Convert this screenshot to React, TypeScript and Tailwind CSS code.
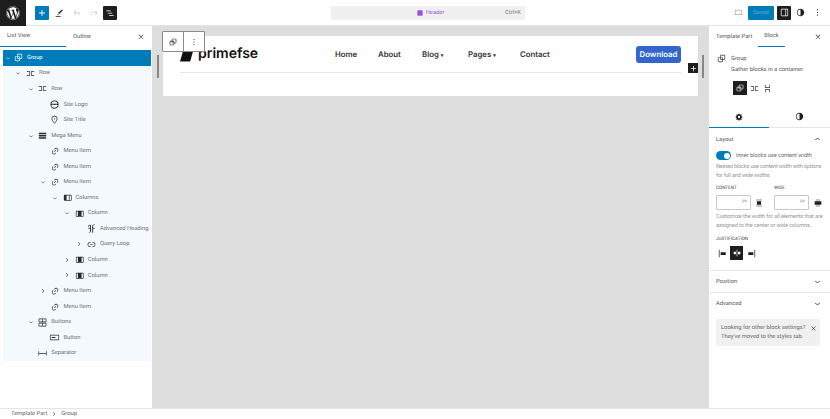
import React from "react";
import { FaWordpress } from "react-icons/fa";

type P = { d: string; className?: string };
const I = ({ d, className = "w-[10px] h-[10px]" }: P) => (
  <svg viewBox="0 0 24 24" fill="currentColor" className={`shrink-0 ${className}`}>
    <path d={d} />
  </svg>
);

const D = {
  group: "M18 4h-7c-1.1 0-2 .9-2 2v3H6c-1.1 0-2 .9-2 2v7c0 1.1.9 2 2 2h7c1.1 0 2-.9 2-2v-3h3c1.1 0 2-.9 2-2V6c0-1.1-.9-2-2-2zm-4.5 14c0 .3-.2.5-.5.5H6c-.3 0-.5-.2-.5-.5v-7c0-.3.2-.5.5-.5h3V13c0 1.1.9 2 2 2h2.5v3zm0-4.5H11c-.3 0-.5-.2-.5-.5v-2.5H13c.3 0 .5.2.5.5v2.5zm5-.5c0 .3-.2.5-.5.5h-3V11c0-1.1-.9-2-2-2h-2.5V6c0-.3.2-.5.5-.5h7c.3 0 .5.2.5.5v7z",
  row: "M4 6.5h5a2 2 0 0 1 2 2v7a2 2 0 0 1-2 2H4V16h5a.5.5 0 0 0 .5-.5v-7A.5.5 0 0 0 9 8H4V6.5Zm16 0h-5a2 2 0 0 0-2 2v7a2 2 0 0 0 2 2h5V16h-5a.5.5 0 0 1-.5-.5v-7A.5.5 0 0 1 15 8h5V6.5Z",
  stack: "M17.5 4v5a2 2 0 0 1-2 2h-7a2 2 0 0 1-2-2V4H8v5a.5.5 0 0 0 .5.5h7A.5.5 0 0 0 16 9V4h1.5Zm0 16v-5a2 2 0 0 0-2-2h-7a2 2 0 0 0-2 2v5H8v-5a.5.5 0 0 1 .5-.5h7a.5.5 0 0 1 .5.5v5h1.5Z",
  marker: "M12 9c-.8 0-1.5.7-1.5 1.5S11.2 12 12 12s1.5-.7 1.5-1.5S12.8 9 12 9zm0-5c-3.6 0-6.5 2.8-6.5 6.2 0 .8.3 1.8.9 3.1.5 1.1 1.2 2.3 2 3.6.7 1 3 3.8 3.2 3.9l.4.5.4-.5c.2-.2 2.6-2.9 3.2-3.9.8-1.2 1.5-2.5 2-3.6.6-1.3.9-2.3.9-3.1C18.5 6.8 15.6 4 12 4zm4.3 8.7c-.5 1-1.1 2.2-1.9 3.4-.5.7-1.7 2.2-2.4 3-.7-.8-1.9-2.3-2.4-3-.8-1.2-1.4-2.3-1.9-3.3-.6-1.4-.7-2.2-.7-2.5 0-2.6 2.2-4.7 5-4.7s5 2.1 5 4.7c0 .2-.1 1-.7 2.4z",
  link: "M10 17.389H8.444A5.194 5.194 0 1 1 8.444 7H10v1.5H8.444a3.694 3.694 0 0 0 0 7.389H10v1.5ZM14 7h1.556a5.194 5.194 0 0 1 0 10.39H14v-1.5h1.556a3.694 3.694 0 0 0 0-7.39H14V7Zm-4.5 6h5v-1.5h-5V13Z",
  columns: "M15 7.5h-5v10h5v-10Zm1.5 0v10H19a.5.5 0 0 0 .5-.5V8a.5.5 0 0 0-.5-.5h-2.5ZM6 7.5h2.5v10H6a.5.5 0 0 1-.5-.5V8a.5.5 0 0 1 .5-.5ZM6 6h13a2 2 0 0 1 2 2v9a2 2 0 0 1-2 2H6a2 2 0 0 1-2-2V8a2 2 0 0 1 2-2Z",
  column: "M6 6h13a2 2 0 0 1 2 2v9a2 2 0 0 1-2 2H6a2 2 0 0 1-2-2V8a2 2 0 0 1 2-2Zm0 1.5a.5.5 0 0 0-.5.5v9a.5.5 0 0 0 .5.5h2.5v-10H6Zm10.5 0v10H19a.5.5 0 0 0 .5-.5V8a.5.5 0 0 0-.5-.5h-2.5Z",
  separator: "M4.5 12.5v4H3V7h1.5v3.987h15V7H21v9.5h-1.5v-4h-15Z",
  menu: "M4 6h16v3H4V6Zm0 5h16v3H4v-3Zm0 5h16v3H4v-3Z",
  logo: "M12 3a9 9 0 1 0 0 18 9 9 0 0 0 0-18Zm0 1.7a7.3 7.3 0 0 1 7.1 5.6H4.9A7.3 7.3 0 0 1 12 4.7Zm0 14.6a7.3 7.3 0 0 1-7.2-6h1.4l2.2-1.5 2.2 1.5h2.8l2.2-1.5 2.2 1.5h1.4a7.3 7.3 0 0 1-7.2 6Z",
  buttons: "M5 3.5h14a1.5 1.5 0 0 1 1.5 1.5v5a1.5 1.5 0 0 1-1.500 1.500H5A1.500 1.500 0 0 1 3.500 10V5A1.500 1.500 0 0 1 5 3.500Zm.5 1.500a.5.5 0 0 0-.5.500v4a.5.5 0 0 0 .5.500H11V5H5.500Zm7 0v5h6a.5.5 0 0 0 .5-.500v-4a.5.5 0 0 0-.5-.500h-6ZM5 12.500h14a1.500 1.500 0 0 1 1.500 1.500v5a1.500 1.500 0 0 1-1.500 1.500H5A1.500 1.500 0 0 1 3.500 19v-5A1.500 1.500 0 0 1 5 12.500Zm.5 1.500a.5.5 0 0 0-.5.500v4a.5.5 0 0 0 .5.500H11v-5H5.500Zm7 0v5h6a.5.5 0 0 0 .5-.500v-4a.5.5 0 0 0-.5-.500h-6Z",
  button: "M3 6h18a1 1 0 0 1 1 1v10a1 1 0 0 1-1 1H3a1 1 0 0 1-1-1V7a1 1 0 0 1 1-1Zm.5 1.500v9h17v-9h-17ZM6 11h8v2H6v-2Z",
  heading: "M9 4c-2.500 0-4 1.500-4 3.500 0 1.300.8 2.200 2 2.400V8.500C6.400 8.300 6.200 7.900 6.200 7.400 6.200 6.200 7.300 5.300 9 5.300V11H5.500v1.300H9V17c0 1.800-.8 2.800-2.500 3v1c3 0 4.500-1.500 4.500-4V5.500C11 4.500 10 4 9 4Zm8.500-1c-2.500 0-4 1.600-4 4.200V21h2v-8.700H19V11h-3.500V7c0-1.700.7-2.700 2.300-2.700.7 0 1.200.2 1.700.5V3.400c-.5-.2-1.200-.4-2-.4Z",
  undo: "M18.3 11.7c-.6-.6-1.400-.9-2.300-.9H6.700l2.900-3.300-1.100-1-4.500 5L8.500 16l1-1-2.700-2.700H16c.5 0 .9.200 1.300.5 1 1 1 3.400 1 4.500v.3h1.500v-.2c0-1.500 0-4.300-1.500-5.700z",
  redo: "M15.600 6.500l-1.100 1 2.900 3.300H8c-.9 0-1.700.3-2.300.9-1.400 1.500-1.400 4.200-1.400 5.600v.2h1.500v-.3c0-1.100 0-3.500 1-4.500.3-.3.7-.5 1.300-.5h9.200L14.500 15l1.100 1.100 4.600-4.600-4.600-5z",
  listview: "M3 6h11v1.500H3V6Zm3.500 5.500h11V13h-11v-1.500ZM21 17H10v1.500h11V17Z",
  plus: "M11 5h2v6h6v2h-6v6h-2v-6H5v-2h6V5Z",
  pen: "M19.500 3.500l1.800 1.800-8 8.200-3-.5.300-2.500 8.900-7Zm-9.800 10.700 1.700 1.800-2.400 1.500-1.500-1 2.200-2.300ZM4 20h12v1.500H4V20Z",
  close: "M13 11.800l6.100-6.100-1.100-1L12 10.800 6 4.700 4.900 5.800 11 11.800 4.900 17.900 6 19l6-6.100 6 6.100 1.100-1.100-6.100-6.100Z",
  contrast: "M12 4c-4.400 0-8 3.600-8 8s3.600 8 8 8 8-3.600 8-8-3.600-8-8-8zm0 14.500c-3.600 0-6.500-2.900-6.500-6.500S8.400 5.500 12 5.500v13z",
  sidebar: "M18 4H6c-1.100 0-2 .9-2 2v12c0 1.100.9 2 2 2h12c1.100 0 2-.9 2-2V6c0-1.100-.9-2-2-2zM6 18.500c-.3 0-.5-.2-.5-.5V6c0-.3.2-.5.5-.5h8v13H6zm12.500-.5c0 .3-.2.5-.5.500h-2.500v-13H18c.3 0 .5.2.5.5v12z",
  desktop: "M20.500 16h-.7V8c0-1.100-.9-2-2-2H6.200c-1.100 0-2 .9-2 2v8h-.7c-.8 0-1.500.7-1.500 1.500h20c0-.8-.7-1.500-1.500-1.500zM5.700 8c0-.3.2-.5.500-.5h11.600c.3 0 .5.200.5.500v7.600H5.700V8z",
  dots: "M13 19h-2v-2h2v2Zm0-6h-2v-2h2v2Zm0-6h-2V5h2v2Z",
  down: "M17.500 11.600L12 16l-5.500-4.400.9-1.200L12 14l4.500-3.600 1 1.200z",
  up: "M6.500 12.400L12 8l5.500 4.400-.9 1.200L12 10l-4.500 3.600-1-1.200z",
  right: "M10.600 6L9.400 7l3.600 5-3.600 5 1.200 1 4.400-6-4.400-6z",
  cog: "M10.300 2h3.400l.5 2.700 1.600.7 2.300-1.500 2.400 2.400-1.500 2.300.7 1.600 2.300.5v3.400l-2.300.5-.7 1.600 1.500 2.300-2.400 2.400-2.300-1.500-1.600.7-.5 2.300h-3.400l-.5-2.300-1.600-.7-2.300 1.500-2.400-2.400 1.500-2.300-.7-1.600-2.300-.5V10.500l2.300-.5.7-1.600-1.500-2.300 2.400-2.400 2.300 1.500 1.600-.7.500-2.500ZM12 8.500a3.500 3.500 0 1 0 0 7 3.500 3.500 0 0 0 0-7Z",
  alignMiddle: "M5 4h14v1.500H5V4Zm0 14.500h14V20H5v-1.500ZM7 8h10v8H7V8Z",
  alignWide: "M7 4h10v1.500H7V4Zm0 14.500h10V20H7v-1.500ZM4 8h16v8H4V8Z",
  jLeft: "M4 4h1.500v16H4V4Zm4 5h11v6H8V9Z",
  jCenter: "M11.200 4h1.600v16h-1.600V4ZM4 9h5.500v6H4V9Zm10.500 0H20v6h-5.500V9Z",
  jRight: "M18.500 4H20v16h-1.500V4ZM5 9h11v6H5V9Z",
};

type Row = { label: string; icon: string; level: number; chev?: "down" | "right"; rot?: boolean };
const rows: Row[] = [
  { label: "Row", icon: D.row, level: 1, chev: "down" },
  { label: "Row", icon: D.row, level: 2, chev: "down" },
  { label: "Site Logo", icon: D.logo, level: 3 },
  { label: "Site Title", icon: D.marker, level: 3 },
  { label: "Mega Menu", icon: D.menu, level: 2, chev: "down" },
  { label: "Menu Item", icon: D.link, level: 3, rot: true },
  { label: "Menu Item", icon: D.link, level: 3, rot: true },
  { label: "Menu Item", icon: D.link, level: 3, chev: "down", rot: true },
  { label: "Columns", icon: D.columns, level: 4, chev: "down" },
  { label: "Column", icon: D.column, level: 5, chev: "down" },
  { label: "Advanced Heading", icon: D.heading, level: 6 },
  { label: "Query Loop", icon: D.link, level: 6, chev: "right" },
  { label: "Column", icon: D.column, level: 5, chev: "right" },
  { label: "Column", icon: D.column, level: 5, chev: "right" },
  { label: "Menu Item", icon: D.link, level: 3, chev: "right", rot: true },
  { label: "Menu Item", icon: D.link, level: 3, rot: true },
  { label: "Buttons", icon: D.buttons, level: 2, chev: "down" },
  { label: "Button", icon: D.button, level: 3 },
  { label: "Separator", icon: D.separator, level: 2 },
];
const pads = ["pl-0", "pl-[11.3px]", "pl-[23.5px]", "pl-[35.7px]", "pl-[47.9px]", "pl-[60.1px]", "pl-[72.3px]"];

const ListRow = ({ r }: { r: Row }) => (
  <div className={`flex items-center h-[15.55px] text-[#707070] ${pads[r.level]}`}>
    <span className="w-[8px] h-[8px] flex items-center justify-center text-[#1e1e1e]">
      {r.chev && <I d={r.chev === "down" ? D.down : D.right} className="w-[8px] h-[8px]" />}
    </span>
    <span className="ml-[2.7px] w-[11px] flex justify-center text-[#2a2a2a]">
      <I d={r.icon} className={r.rot ? "w-[10px] h-[10px] -rotate-45" : "w-[11px] h-[11px]"} />
    </span>
    <span className="ml-[3px] whitespace-nowrap pt-[1px]">{r.label}</span>
  </div>
);

export default function App() {
  return (
    <div className="w-[830px] h-[419px] flex flex-col overflow-hidden bg-white text-[5.8px] text-[#333] font-['Roboto',sans-serif] [text-rendering:geometricPrecision]">
      <header className="h-[26px] shrink-0 flex items-center border-b border-[#e4e4e4]">
        <div className="w-[26px] h-[26px] bg-[#1e1e1e] flex items-center justify-center text-white">
          <FaWordpress className="w-[14px] h-[14px]" />
        </div>
        <div className="ml-[9px] w-[14px] h-[14px] bg-[#007cba] text-white flex items-center justify-center rounded-[1px]">
          <I d={D.plus} className="w-[10px] h-[10px]" />
        </div>
        <I d={D.pen} className="ml-[5px] w-[10px] h-[10px] text-[#1e1e1e]" />
        <I d={D.undo} className="ml-[8px] w-[10px] h-[10px] text-[#c4c4c4]" />
        <I d={D.redo} className="ml-[7px] w-[10px] h-[10px] text-[#c4c4c4]" />
        <div className="ml-[4px] w-[14px] h-[14px] bg-[#1e1e1e] text-white flex items-center justify-center rounded-[1px]">
          <I d={D.listview} className="w-[10px] h-[10px]" />
        </div>
        <div className="ml-[214px] w-[194px] h-[14px] bg-[#f0f0f0] rounded-[2px] flex items-center pr-[4px] relative">
          <div className="flex-1 flex items-center justify-center gap-[2px] text-[#9b51e0] pl-[24px]">
            <svg viewBox="0 0 24 24" fill="currentColor" className="w-[8px] h-[8px]">
              <path d="M18.500 10.500H10v8h8a.5.5 0 0 0 .5-.5v-7.500Zm-10 0h-3V18a.5.5 0 0 0 .5.500h2.500v-8.500ZM18 4H6a2 2 0 0 0-2 2v12a2 2 0 0 0 2 2h12a2 2 0 0 0 2-2V6a2 2 0 0 0-2-2Z" />
            </svg>
            <span className="pt-[1px]">Header</span>
          </div>
          <span className="text-[#777] pt-[1px]">Ctrl+K</span>
        </div>
        <I d={D.desktop} className="ml-[208px] w-[11px] h-[11px] text-[#aaa]" />
        <div className="ml-[4px] w-[26px] h-[14px] bg-[#007cba] text-[#5fa9d3] flex items-center justify-center rounded-[1px] pt-[1px]">Saved</div>
        <div className="ml-[3px] w-[14px] h-[14px] bg-[#1e1e1e] text-white flex items-center justify-center rounded-[1px]">
          <I d={D.sidebar} className="w-[11px] h-[11px]" />
        </div>
        <I d={D.contrast} className="ml-[4px] w-[11px] h-[11px] text-[#1e1e1e]" />
        <I d={D.dots} className="ml-[6px] w-[11px] h-[11px] text-[#1e1e1e]" />
      </header>

      <div className="flex-1 flex min-h-0">
        <aside className="w-[152px] shrink-0 flex flex-col">
          <div className="h-[21px] flex items-stretch relative">
            <div className="w-[66px] flex items-center pl-[7px] pt-[1px] border-b border-[#007cba] text-[#555]">List View</div>
            <div className="w-[66px] flex items-center pl-[7px] pt-[1px] text-[#555]">Outline</div>
            <div className="flex-1 flex items-center justify-center pr-[2px]">
              <I d={D.close} className="w-[8px] h-[8px] text-[#1e1e1e]" />
            </div>
          </div>
          <div className="mt-[3px] ml-[3px] w-[148px] bg-[#f3f9fd]">
            <div className="flex items-center h-[15.55px] pl-[1px] bg-[#007cba] text-white">
              <span className="w-[8px] h-[8px] flex items-center justify-center">
                <I d={D.down} className="w-[8px] h-[8px]" />
              </span>
              <span className="ml-[1px] w-[11px] flex justify-center">
                <I d={D.group} className="w-[11px] h-[11px]" />
              </span>
              <span className="ml-[3px] pt-[1px]">Group</span>
            </div>
            {rows.map((r, i) => (
              <ListRow key={i} r={r} />
            ))}
          </div>
        </aside>

        <main className="flex-1 bg-[#dddddd] relative pt-[10px] pl-[11px] pr-[11px]">
          <div className="w-[535px] h-[60px] bg-white pl-[17px] pr-[17px] font-['Inter',sans-serif]">
            <div className="h-[37px] flex items-center border-b border-[#e8e8e8]">
              <div className="flex items-center w-[155px]">
                <span className="w-[13px] h-[10px] mt-[5px] bg-[#111] [clip-path:polygon(22%_0,100%_0,78%_100%,0_100%)]"></span>
                <span className="ml-[5px] text-[14px] font-semibold text-[#111] leading-none">primefse</span>
              </div>
              <nav className="flex items-center text-[7.8px] font-semibold text-[#333] pt-[1px]">
                <span className="w-[43px]">Home</span>
                <span className="w-[44px]">About</span>
                <span className="w-[46px]">Blog <span className="text-[5px]">▾</span></span>
                <span className="w-[52px]">Pages <span className="text-[5px]">▾</span></span>
                <span>Contact</span>
              </nav>
              <div className="ml-auto w-[45px] h-[17px] rounded-[3px] bg-[#3366cc] text-white text-[7.8px] font-semibold flex items-center justify-center pt-[1px]">Download</div>
            </div>
          </div>
          <div className="absolute left-[10px] top-[5px] w-[43px] h-[21px] flex bg-white border border-[#8a8a8a] rounded-[1px]">
            <div className="w-[21px] flex items-center justify-center border-r border-[#8a8a8a]">
              <I d={D.group} className="w-[10px] h-[10px] text-[#1e1e1e]" />
            </div>
            <div className="flex-1 flex items-center justify-center">
              <I d={D.dots} className="w-[10px] h-[10px] text-[#1e1e1e]" />
            </div>
          </div>
          <div className="absolute left-[536px] top-[37px] w-[10px] h-[10px] bg-[#1e1e1e] text-white flex items-center justify-center">
            <I d={D.plus} className="w-[9px] h-[9px]" />
          </div>
          <div className="absolute left-[5px] top-[29px] w-[1.5px] h-[23px] bg-[#888]"></div>
          <div className="absolute left-[550px] top-[29px] w-[1.5px] h-[23px] bg-[#888]"></div>
        </main>

        <aside className="w-[121px] shrink-0 flex flex-col">
          <div className="h-[21px] flex items-stretch relative shrink-0 pl-[7px] text-[#555]">
            <div className="flex items-center w-[42px] pt-[1px] whitespace-nowrap">Template Part</div>
            <div className="w-[27px] flex items-center justify-center pt-[1px] border-b border-[#007cba]">Block</div>
            <div className="flex-1 flex items-center justify-end pr-[8px]">
              <I d={D.close} className="w-[8px] h-[8px] text-[#1e1e1e]" />
            </div>
          </div>
          <div className="pl-[7px] pt-[6px] flex items-start shrink-0">
            <I d={D.group} className="w-[11px] h-[11px] text-[#333]" />
            <div className="ml-[4px] leading-[10.5px] pt-[1px]">
              <div className="text-[#555]">Group</div>
              <div className="text-[#555] whitespace-nowrap">Gather blocks in a container.</div>
            </div>
          </div>
          <div className="h-[14px] mt-[6px] ml-[24px] flex items-center shrink-0">
            <div className="w-[14px] h-[14px] bg-[#1e1e1e] text-white flex items-center justify-center">
              <I d={D.group} className="w-[10px] h-[10px]" />
            </div>
            <I d={D.row} className="ml-[2px] w-[11px] h-[11px] text-[#333]" />
            <I d={D.stack} className="ml-[2px] w-[11px] h-[11px] text-[#333]" />
          </div>
          <div className="h-[22px] mt-[11px] flex items-stretch border-b border-[#e4e4e4] shrink-0">
            <div className="w-[60px] flex items-center justify-center border-b border-[#007cba] mb-[-1px]">
              <I d={D.cog} className="w-[8px] h-[8px] text-[#1e1e1e]" />
            </div>
            <div className="w-[60px] flex items-center justify-center">
              <I d={D.contrast} className="w-[11px] h-[11px] text-[#1e1e1e]" />
            </div>
          </div>
          <div className="px-[7px] border-b border-[#e8e8e8] h-[143px] shrink-0">
            <div className="h-[22px] flex items-center justify-between text-[#555]">
              <span className="pt-[2px]">Layout</span>
              <I d={D.up} className="w-[11px] h-[11px] text-[#333]" />
            </div>
            <div className="h-[9px] mt-[1px] flex items-center">
              <span className="w-[15px] h-[9px] rounded-full bg-[#007cba] flex items-center justify-end pr-[1.5px]">
                <span className="w-[6px] h-[6px] rounded-full bg-white"></span>
              </span>
              <span className="ml-[5px] whitespace-nowrap text-[#666] text-[5.6px] pt-[1px]">Inner blocks use content width</span>
            </div>
            <p className="mt-[3px] text-[#959595] leading-[8.5px] text-[5.6px] tracking-[-0.18px] whitespace-nowrap">Nested blocks use content width with options<br />for full and wide widths.</p>
            <div className="mt-[5px] flex">
              <div className="w-[59px]">
                <div className="text-[4.6px] text-[#444] uppercase h-[7px] leading-[7px]">Content</div>
                <div className="mt-[3px] flex items-center">
                  <div className="w-[35px] h-[15px] border border-[#c8c8c8] rounded-[1px] flex items-center justify-end pr-[3px] text-[4.5px] text-[#888]">px</div>
                  <I d={D.alignMiddle} className="ml-[3px] w-[10px] h-[10px] text-[#1e1e1e]" />
                </div>
              </div>
              <div>
                <div className="text-[4.6px] text-[#444] uppercase h-[7px] leading-[7px]">Wide</div>
                <div className="mt-[3px] flex items-center">
                  <div className="w-[35px] h-[15px] border border-[#c8c8c8] rounded-[1px] flex items-center justify-end pr-[3px] text-[4.5px] text-[#888]">px</div>
                  <I d={D.alignWide} className="ml-[4px] w-[10px] h-[10px] text-[#1e1e1e]" />
                </div>
              </div>
            </div>
            <p className="mt-[3px] text-[#959595] leading-[8.5px] text-[5.6px] tracking-[-0.1px] whitespace-nowrap">Customize the width for all elements that are<br />assigned to the center or wide columns.</p>
            <div className="mt-[6px] text-[4.6px] text-[#444] uppercase h-[7px] leading-[7px]">Justification</div>
            <div className="mt-[3px] flex items-center ml-[1px]">
              <I d={D.jLeft} className="w-[11px] h-[11px] text-[#1e1e1e]" />
              <span className="ml-[2px] w-[13px] h-[14px] bg-[#1e1e1e] text-white flex items-center justify-center">
                <I d={D.jCenter} className="w-[10px] h-[10px]" />
              </span>
              <I d={D.jRight} className="ml-[3px] w-[11px] h-[11px] text-[#1e1e1e]" />
            </div>
          </div>
          <div className="flex items-center justify-between px-[7px] h-[22px] border-b border-[#e8e8e8] text-[#555] shrink-0">
            <span className="pt-[2px]">Position</span>
            <I d={D.down} className="w-[11px] h-[11px] text-[#333]" />
          </div>
          <div className="flex items-center justify-between px-[7px] h-[21px] text-[#555] shrink-0">
            <span className="pt-[2px]">Advanced</span>
            <I d={D.down} className="w-[11px] h-[11px] text-[#333]" />
          </div>
          <div className="mt-[5px] ml-[7px] w-[104px] h-[27px] bg-[#f0f0f0] flex items-center pl-[5px] pr-[3px] shrink-0">
            <p className="flex-1 leading-[9px] text-[#666] whitespace-nowrap">Looking for other block settings?<br />They've moved to the styles tab.</p>
            <I d={D.close} className="w-[7px] h-[7px] text-[#1e1e1e] mb-[8px]" />
          </div>
        </aside>
      </div>

      <footer className="h-[11px] shrink-0 border-t border-[#e4e4e4] flex items-center pl-[11px] text-[#666]">
        <span className="pt-[1px]">Template Part</span>
        <I d={D.right} className="mx-[3px] w-[8px] h-[8px] text-[#333]" />
        <span className="pt-[1px]">Group</span>
      </footer>
    </div>
  );
}
